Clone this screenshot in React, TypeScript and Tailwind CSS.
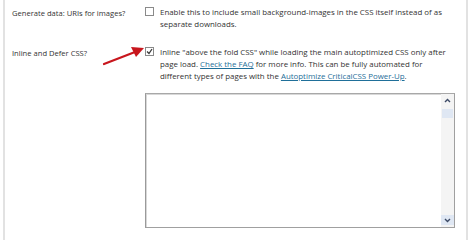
const font = { fontFamily: '"Open Sans", "Noto Sans", sans-serif' };

function Checkbox({ checked }: { checked?: boolean }) {
  return (
    <span className="mt-[1px] flex h-[9px] w-[9px] shrink-0 items-center justify-center border border-[#8a8a8a] bg-white">
      {checked && (
        <svg width="7" height="7" viewBox="0 0 7 7">
          <path d="M1 3.5 L3 5.5 L6 1" fill="none" stroke="#3a3a3a" strokeWidth="1.3" />
        </svg>
      )}
    </span>
  );
}

function Link({ children }: { children: React.ReactNode }) {
  return <span className="text-[#1f6f99] underline">{children}</span>;
}

export default function App() {
  return (
    <div className="h-[240px] w-[474px] overflow-hidden bg-white text-[7.6px] leading-[12px] text-[#333]" style={font}>
      <div className="relative ml-[3px] h-full w-[465px] border-x-2 border-[#e2e2e2]">
        {/* row 1 */}
        <div className="flex pt-[6px]">
          <div className="w-[140px] shrink-0 pl-[7px] pt-[1px]">Generate data: URIs for images?</div>
          <div className="flex gap-[6px]">
            <Checkbox />
            <p className="w-[290px] text-[7.9px]">
              Enable this to include small background-images in the CSS itself instead of as separate downloads.
            </p>
          </div>
        </div>

        {/* row 2 */}
        <div className="flex pt-[16px]">
          <div className="w-[140px] shrink-0 pl-[7px] pt-[1px]">Inline and Defer CSS?</div>
          <div className="flex flex-col">
            <div className="flex gap-[6px]">
              <Checkbox checked />
              <p className="w-[290px] text-[7.9px]">
                Inline "above the fold CSS" while loading the main autoptimized CSS only after page load.{" "}
                <Link>Check the FAQ</Link> for more info. This can be fully automated for different types of pages with
                the <Link>Autoptimize CriticalCSS Power-Up</Link>.
              </p>
            </div>
            <div className="mt-[11px] flex h-[135px] w-[310px] border border-[#a0a0a0] border-l-[#9a9a9a] border-t-[#a8a8a8] shadow-[inset_1px_1px_0_#d8d8d8]">
              <div className="flex-1" />
              <div className="flex w-[13px] flex-col justify-between bg-[#f4f4f4] py-[2px]">
                <div className="flex flex-col gap-[4px]">
                  <div className="flex h-[9px] items-center justify-center">
                    <svg width="7" height="5" viewBox="0 0 7 5">
                      <path d="M1 4 L3.5 1.5 L6 4" fill="none" stroke="#3c4a66" strokeWidth="1.4" />
                    </svg>
                  </div>
                  <div className="mx-[1px] h-[9px] bg-[#dfe7f3]" />
                </div>
                <div className="flex h-[10px] items-center justify-center bg-[#dfe7f3]">
                  <svg width="7" height="5" viewBox="0 0 7 5">
                    <path d="M1 1 L3.5 3.5 L6 1" fill="none" stroke="#3c4a66" strokeWidth="1.4" />
                  </svg>
                </div>
              </div>
            </div>
          </div>
        </div>

        {/* red arrow pointing at the checkbox */}
        <svg className="absolute left-[96px] top-[44px]" width="46" height="24" viewBox="0 0 46 24">
          <path d="M3 20 L34 8" stroke="#c8161d" strokeWidth="2.2" strokeLinecap="round" />
          <path d="M43 4 L30 3 L35 13 Z" fill="#c8161d" />
        </svg>
      </div>
    </div>
  );
}
